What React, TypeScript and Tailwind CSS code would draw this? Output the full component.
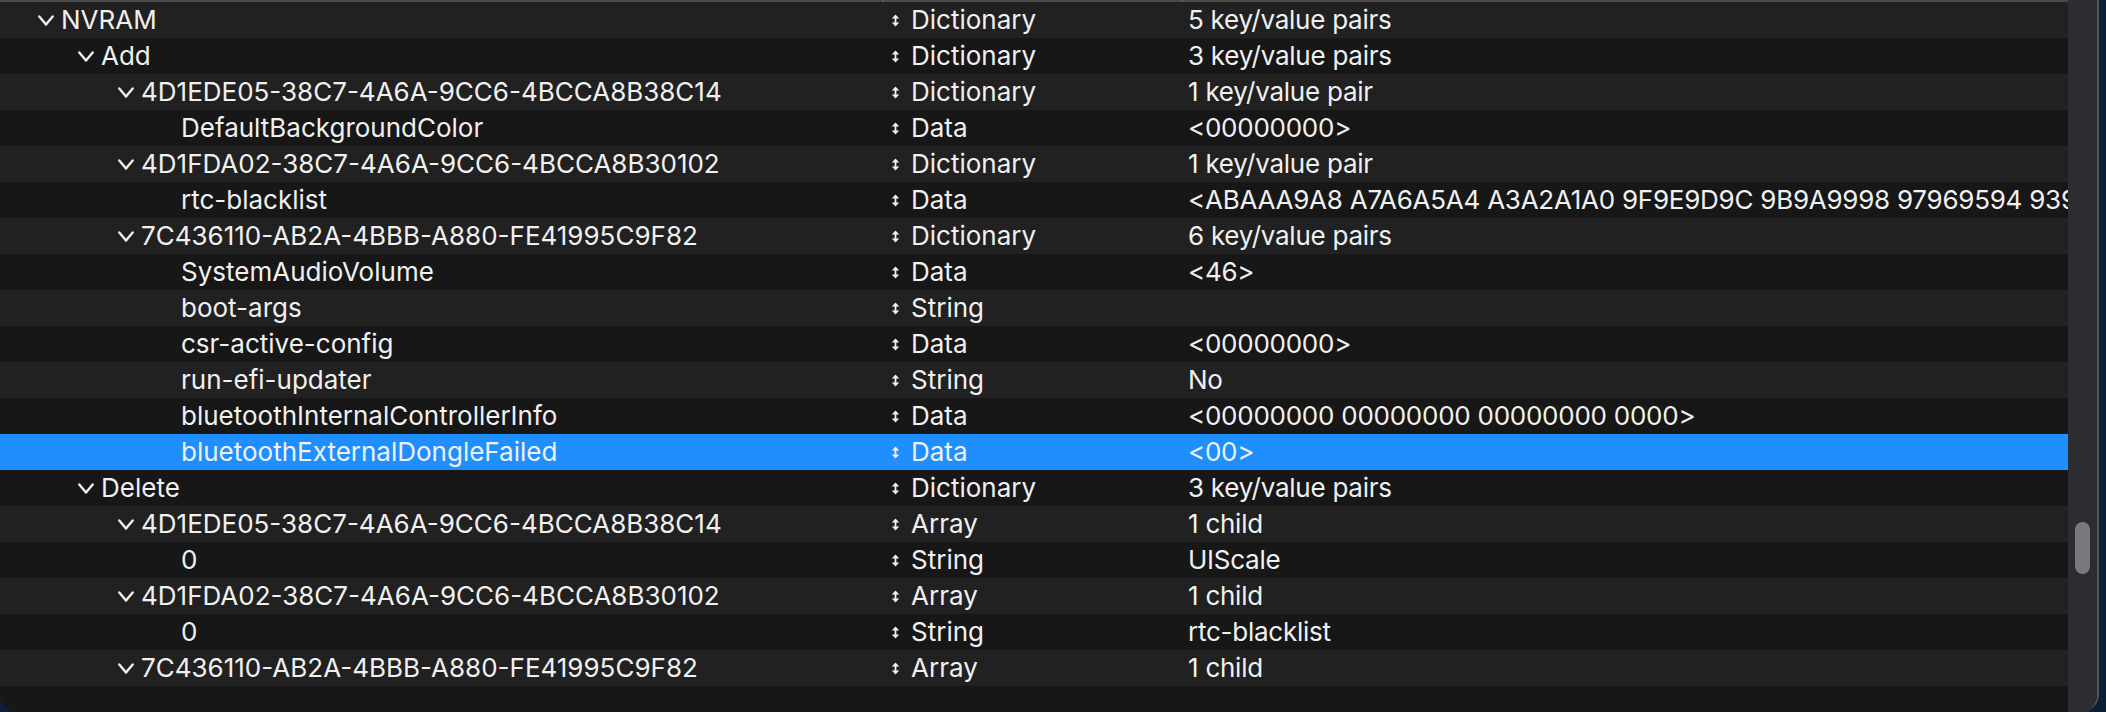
import React from "react";

type Row = {
  key: string;
  depth: number;
  type: string;
  value: string;
  open?: boolean;
};

const rows: Row[] = [
  { key: "NVRAM", depth: 0, type: "Dictionary", value: "5 key/value pairs", open: true },
  { key: "Add", depth: 1, type: "Dictionary", value: "3 key/value pairs", open: true },
  { key: "4D1EDE05-38C7-4A6A-9CC6-4BCCA8B38C14", depth: 2, type: "Dictionary", value: "1 key/value pair", open: true },
  { key: "DefaultBackgroundColor", depth: 3, type: "Data", value: "<00000000>" },
  { key: "4D1FDA02-38C7-4A6A-9CC6-4BCCA8B30102", depth: 2, type: "Dictionary", value: "1 key/value pair", open: true },
  {
    key: "rtc-blacklist",
    depth: 3,
    type: "Data",
    value: "<ABAAA9A8 A7A6A5A4 A3A2A1A0 9F9E9D9C 9B9A9998 97969594 93929190 8F8E8D8C>",
  },
  { key: "7C436110-AB2A-4BBB-A880-FE41995C9F82", depth: 2, type: "Dictionary", value: "6 key/value pairs", open: true },
  { key: "SystemAudioVolume", depth: 3, type: "Data", value: "<46>" },
  { key: "boot-args", depth: 3, type: "String", value: "" },
  { key: "csr-active-config", depth: 3, type: "Data", value: "<00000000>" },
  { key: "run-efi-updater", depth: 3, type: "String", value: "No" },
  { key: "bluetoothInternalControllerInfo", depth: 3, type: "Data", value: "<00000000 00000000 00000000 0000>" },
  { key: "bluetoothExternalDongleFailed", depth: 3, type: "Data", value: "<00>" },
  { key: "Delete", depth: 1, type: "Dictionary", value: "3 key/value pairs", open: true },
  { key: "4D1EDE05-38C7-4A6A-9CC6-4BCCA8B38C14", depth: 2, type: "Array", value: "1 child", open: true },
  { key: "0", depth: 3, type: "String", value: "UIScale" },
  { key: "4D1FDA02-38C7-4A6A-9CC6-4BCCA8B30102", depth: 2, type: "Array", value: "1 child", open: true },
  { key: "0", depth: 3, type: "String", value: "rtc-blacklist" },
  { key: "7C436110-AB2A-4BBB-A880-FE41995C9F82", depth: 2, type: "Array", value: "1 child", open: true },
];

const SELECTED = 12;

function Chevron() {
  return (
    <svg width="16" height="11" viewBox="0 0 16 11" className="shrink-0">
      <polyline
        points="1.3,1.5 8,9.6 14.7,1.5"
        fill="none"
        stroke="currentColor"
        strokeWidth="2.4"
        strokeLinecap="round"
        strokeLinejoin="round"
      />
    </svg>
  );
}

function UpDown() {
  return (
    <svg width="9" height="13" viewBox="0 0 9 13" className="shrink-0">
      <path d="M0.8 4.6 L4.5 0.6 L8.2 4.6 Z" fill="currentColor" />
      <path d="M0.8 8.4 L4.5 12.4 L8.2 8.4 Z" fill="currentColor" />
      <rect x="3.6" y="3.5" width="1.8" height="6" fill="currentColor" />
    </svg>
  );
}

const depthPad = ["pl-[38px]", "pl-[78px]", "pl-[118px]", "pl-[158px]"];

function TreeRow({ row, index }: { row: Row; index: number }) {
  const selected = index === SELECTED;
  const bg = selected ? "bg-[#1f8ffe]" : index % 2 === 0 ? "bg-[#212121]" : "bg-[#171717]";

  return (
    <div className={`flex h-[36px] shrink-0 items-center whitespace-nowrap ${bg}`}>
      {/* Key */}
      <div className={`flex w-[882px] shrink-0 items-center gap-[7px] ${depthPad[row.depth]}`}>
        <span className="flex w-[16px] justify-center">{row.open && <Chevron />}</span>
        <span>{row.key}</span>
      </div>
      {/* Type */}
      <div className="flex w-[299px] shrink-0 items-center gap-[11px] pl-[9px]">
        <UpDown />
        <span>{row.type}</span>
      </div>
      {/* Value */}
      <div className="min-w-0 flex-1 overflow-hidden pl-[7px] tracking-[-0.25px]">{row.value}</div>
    </div>
  );
}

export default function App() {
  return (
    <div className="flex h-[712px] w-[2106px] bg-[#0b2036]">
      <div className="flex h-full w-[2099px] overflow-hidden rounded-b-[18px] border-r-2 border-[#55565a] bg-[#171717]">
        {/* Table */}
        <div
          className="flex min-w-0 flex-1 flex-col text-[26px] leading-[36px] text-[#f0f0f0]"
          style={{ fontFamily: "Inter, 'Noto Sans', sans-serif" }}
        >
          {/* header bottom edge */}
          <div className="flex h-[2px] shrink-0 bg-[#4a4a4a]">
            <div className="w-[882px]" />
            <div className="w-[2px] bg-[#5c5c5c]" />
            <div className="w-[297px]" />
            <div className="w-[2px] bg-[#5c5c5c]" />
          </div>
          {rows.map((row, i) => (
            <TreeRow key={i} row={row} index={i} />
          ))}
        </div>
        {/* Scrollbar */}
        <div className="w-[29px] shrink-0 bg-[#2c2d31] px-[7px] pt-[522px]">
          <div className="h-[52px] w-[15px] rounded-full bg-[#7a7a7e]" />
        </div>
      </div>
    </div>
  );
}
